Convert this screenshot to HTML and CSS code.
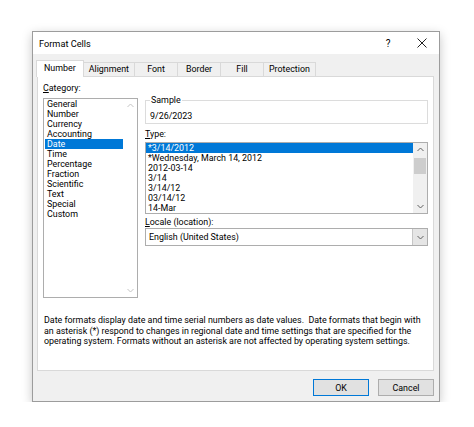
FILE: index.html
```html
<!DOCTYPE html>
<html lang="en">
<head>
<meta charset="UTF-8">
<title>Format Cells</title>
<link rel="stylesheet" href="styles.css">
</head>

<body>

<div class="dialog">
    <div class="titlebar">
        <span class="title">Format Cells</span>
        <span class="cap-btn help">?</span>
        <span class="cap-btn close">
            <svg width="10" height="10" viewBox="0 0 10 10"><path d="M0.5 0.5 L9.5 9.5 M9.5 0.5 L0.5 9.5" stroke="#222" stroke-width="1" fill="none"/></svg>
        </span>
    </div>

    <div class="client">
        <div class="tabs">
            <div class="tab active">Number</div>
            <div class="tab">Alignment</div>
            <div class="tab">Font</div>
            <div class="tab">Border</div>
            <div class="tab">Fill</div>
            <div class="tab">Protection</div>
        </div>

        <div class="panel">
            <div class="panel-top">
                <div class="cat-col">
                    <div class="label"><u>C</u>ategory:</div>
                    <div class="listbox cat-list">
                        <ul class="items">
                            <li>General</li>
                            <li>Number</li>
                            <li>Currency</li>
                            <li>Accounting</li>
                            <li class="selected">Date</li>
                            <li>Time</li>
                            <li>Percentage</li>
                            <li>Fraction</li>
                            <li>Scientific</li>
                            <li>Text</li>
                            <li>Special</li>
                            <li>Custom</li>
                        </ul>
                        <div class="vscroll off">
                            <svg class="arrow" width="7" height="5" viewBox="0 0 7 5"><polyline points="0.5,4 3.5,1 6.5,4" fill="none" stroke="#c4c4c4" stroke-width="1"/></svg>
                            <div class="track"></div>
                            <svg class="arrow" width="7" height="5" viewBox="0 0 7 5"><polyline points="0.5,1 3.5,4 6.5,1" fill="none" stroke="#c4c4c4" stroke-width="1"/></svg>
                        </div>
                    </div>
                </div>

                <div class="detail-col">
                    <fieldset class="sample">
                        <legend>Sample</legend>
                        <div class="sample-value">9/26/2023</div>
                    </fieldset>

                    <div class="label type-label"><u>T</u>ype:</div>
                    <div class="listbox type-list">
                        <ul class="items">
                            <li class="selected">*3/14/2012</li>
                            <li>*Wednesday, March 14, 2012</li>
                            <li>2012-03-14</li>
                            <li>3/14</li>
                            <li>3/14/12</li>
                            <li>03/14/12</li>
                            <li>14-Mar</li>
                        </ul>
                        <div class="vscroll">
                            <svg class="arrow" width="7" height="5" viewBox="0 0 7 5"><polyline points="0.5,4 3.5,1 6.5,4" fill="none" stroke="#606060" stroke-width="1"/></svg>
                            <div class="track"><div class="thumb"></div></div>
                            <svg class="arrow" width="7" height="5" viewBox="0 0 7 5"><polyline points="0.5,1 3.5,4 6.5,1" fill="none" stroke="#606060" stroke-width="1"/></svg>
                        </div>
                    </div>

                    <div class="label locale-label"><u>L</u>ocale (location):</div>
                    <div class="combo">
                        <span class="combo-text">English (United States)</span>
                        <span class="combo-btn">
                            <svg width="7" height="5" viewBox="0 0 7 5"><polyline points="0.5,1 3.5,4 6.5,1" fill="none" stroke="#606060" stroke-width="1"/></svg>
                        </span>
                    </div>
                </div>
            </div>

            <p class="desc">Date formats display date and time serial numbers as date values.&nbsp; Date formats that begin with<br>
            an asterisk (*) respond to changes in regional date and time settings that are specified for the<br>
            operating system. Formats without an asterisk are not affected by operating system settings.</p>
        </div>

        <div class="buttons">
            <button class="btn default">OK</button>
            <button class="btn">Cancel</button>
        </div>
    </div>
</div>

</body>
</html>
```

FILE: styles.css
```css
body {
    margin: 0;
    background: #fff;
    font-family: Roboto, "Liberation Sans", sans-serif;
    font-size: 8.9px;
    color: #000;
}

.dialog {
    margin: 31px 0 0 32px;
    width: 408px;
    height: 371px;
    box-sizing: border-box;
    border: 1px solid #9c9c9c;
    background: #f0f0f0;
    box-shadow: 0 3px 10px rgba(0, 0, 0, 0.22);
    display: flex;
    flex-direction: column;
}

/* title bar */
.titlebar {
    height: 22px;
    background: #fff;
    display: flex;
    align-items: center;
    padding-left: 6px;
}

.title {
    font-size: 9.2px;
    flex: 1;
}

.cap-btn {
    width: 34px;
    height: 22px;
    display: flex;
    align-items: center;
    justify-content: center;
}

.help {
    font-size: 10px;
}

/* client area */
.client {
    flex: 1;
    padding: 6px 5px 0 4px;
}

.tabs {
    display: flex;
    align-items: flex-end;
    height: 16px;
    position: relative;
    z-index: 1;
}

.tab {
    box-sizing: border-box;
    height: 14px;
    min-width: 43px;
    padding: 0 5px;
    border: 1px solid #d9d9d9;
    border-bottom: none;
    border-left: none;
    background: #f0f0f0;
    text-align: center;
    line-height: 13px;
}

.tab.active {
    height: 17px;
    margin: 0 0 -1px -1px;
    padding: 0 7px;
    border-left: 1px solid #d9d9d9;
    background: #fff;
    line-height: 15px;
}

.panel {
    box-sizing: border-box;
    height: 295px;
    border: 1px solid #d9d9d9;
    background: #fff;
    padding: 6px 5px 0 5px;
}

.panel-top {
    display: grid;
    grid-template-columns: 95px 283px;
    column-gap: 7px;
}

.label {
    line-height: 11px;
}

.label u {
    text-decoration-thickness: 1px;
    text-underline-offset: 1px;
}

/* list boxes */
.listbox {
    box-sizing: border-box;
    border: 1px solid #adadad;
    background: #fff;
    display: flex;
}

.items {
    list-style: none;
    margin: 0;
    padding: 0;
    flex: 1;
}

.items li {
    height: 10px;
    line-height: 10px;
    padding-left: 2px;
    white-space: nowrap;
}

.items li.selected {
    background: #0078d7;
    color: #fff;
}

.cat-list {
    margin-top: 4px;
    height: 200px;
}

.cat-list .items {
    padding: 0 0 0 1px;
}

.cat-list .items li {
    padding-left: 2px;
}

.vscroll {
    width: 14px;
    display: flex;
    flex-direction: column;
    align-items: center;
    background: #f0f0f0;
}

.vscroll.off {
    background: #fff;
}

.vscroll .arrow {
    margin: 4px 0;
    flex: none;
}

.vscroll .track {
    flex: 1;
    width: 100%;
}

.thumb {
    margin: 2px 1px 0;
    height: 16px;
    background: #cdcdcd;
}

/* right-hand side */
.sample {
    margin: 12px 0 0;
    padding: 0 4px 1px;
    border: 1px solid #dcdcdc;
    width: 283px;
    box-sizing: border-box;
}

.sample legend {
    padding: 0 1px;
    line-height: 11px;
}

.sample-value {
    line-height: 11px;
    padding-top: 5px;
}

.type-label {
    margin: 5px 0 2px;
}

.type-list {
    height: 72px;
}

.locale-label {
    margin: 3px 0 0;
}

.combo {
    box-sizing: border-box;
    height: 18px;
    border: 1px solid #adadad;
    background: #fff;
    display: flex;
    align-items: stretch;
}

.combo-text {
    flex: 1;
    padding-left: 3px;
    line-height: 16px;
}

.combo-btn {
    width: 14px;
    background: #e5e5e5;
    border-left: 1px solid #c6c6c6;
    display: flex;
    align-items: center;
    justify-content: center;
}

.desc {
    margin: 17px 0 0 1px;
    line-height: 10.5px;
    white-space: nowrap;
}

/* dialog buttons */
.buttons {
    display: flex;
    justify-content: flex-end;
    gap: 9px;
    margin-top: 8px;
}

.btn {
    box-sizing: border-box;
    width: 56px;
    height: 17px;
    padding: 0;
    font-family: inherit;
    font-size: 8.9px;
    background: #e1e1e1;
    border: 1px solid #adadad;
    color: #000;
}

.btn.default {
    border: 1px solid #0078d7;
}
```
